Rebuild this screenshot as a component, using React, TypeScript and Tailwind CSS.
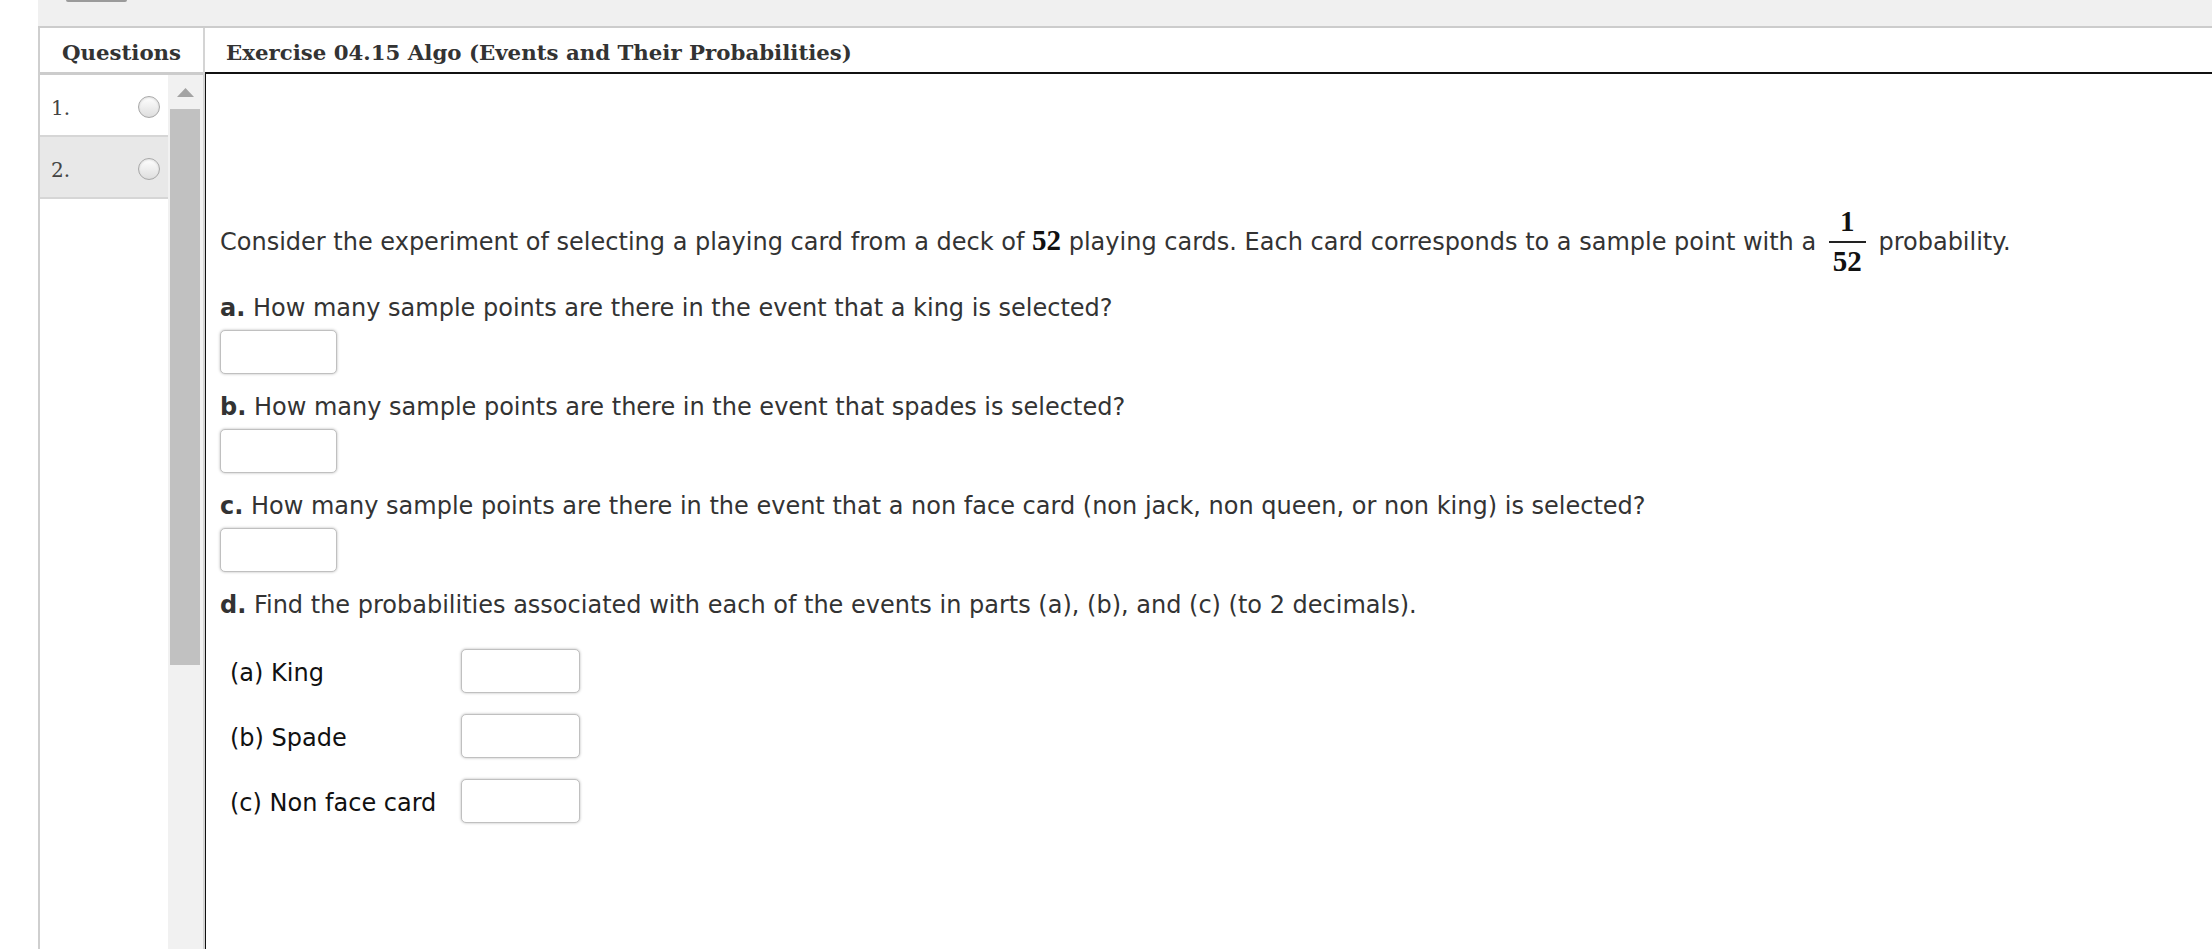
import React from 'react';

const sans = "font-['DejaVu_Sans',Verdana,sans-serif]";
const serif = "font-['DejaVu_Serif',serif]";

function AnswerBox({ className = '' }: { className?: string }) {
  return (
    <input
      type="text"
      aria-label="answer"
      className={`block h-[44px] rounded-[5px] border border-[#c0c0c0] bg-white shadow-[0_0_3px_rgba(0,0,0,0.28)] outline-none ${className}`}
    />
  );
}

function Radio() {
  return (
    <span className="mt-[4px] block h-[22px] w-[22px] rounded-full border border-[#a8a8a8] bg-linear-to-b from-white to-[#dedede] shadow-[inset_0_1px_2px_rgba(0,0,0,0.12)]" />
  );
}

function Fraction() {
  return (
    <span className="mx-[5px] inline-flex flex-col pb-[4px] align-middle font-['Liberation_Serif',serif] text-[29px] font-bold text-[#111]">
      <span className="block px-[4px] pb-[6px] text-center leading-[28px]">1</span>
      <span className="block h-[2px] bg-[#222]" />
      <span className="block px-[4px] pt-[4px] text-center leading-[28px]">52</span>
    </span>
  );
}

const questions = [
  { key: 'a.', text: 'How many sample points are there in the event that a king is selected?' },
  { key: 'b.', text: 'How many sample points are there in the event that spades is selected?' },
  {
    key: 'c.',
    text: 'How many sample points are there in the event that a non face card (non jack, non queen, or non king) is selected?',
  },
];

const probRows = ['(a) King', '(b) Spade', '(c) Non face card'];

export default function App() {
  return (
    <div className="flex h-[949px] w-full overflow-hidden bg-white">
      <div className="w-[38px] shrink-0" />
      <div className="flex min-w-0 flex-1 flex-col">
        {/* barra de cima */}
        <div className="h-[28px] shrink-0 border-b-2 border-[#cccccc] bg-[#f0f0f0]">
          <div className="ml-[28px] h-[2px] w-[61px] rounded-b-[3px] bg-[#9b9b9b]" />
        </div>

        <div className="flex min-h-0 flex-1 border-l-2 border-[#cfcfcf]">
          {/* lista de questões */}
          <div className="flex w-[165px] shrink-0 flex-col border-r-2 border-[#d4d4d4]">
            <div
              className={`flex h-[44px] shrink-0 items-center justify-center pt-[6px] text-[21.3px] font-bold text-[#333] ${serif}`}
            >
              Questions
            </div>
            <div className="flex min-h-0 flex-1 border-t-[3px] border-[#cccccc]">
              <div className="flex w-[128px] shrink-0 flex-col">
                {['1.', '2.'].map((n, i) => (
                  <div
                    key={n}
                    className={`flex h-[62px] items-center justify-between border-b-2 border-[#d6d6d6] pl-[11px] pr-[8px] ${
                      i === 1 ? 'bg-[#e8e8e8]' : 'bg-white'
                    }`}
                  >
                    <span className={`pt-[5px] text-[20px] text-[#444] ${serif}`}>{n}</span>
                    <Radio />
                  </div>
                ))}
              </div>
              <div className="flex flex-1 flex-col bg-[#f1f1f1]">
                <div className="flex h-[34px] items-center justify-center">
                  <svg width="17" height="9" viewBox="0 0 17 9">
                    <path d="M8.5 0 L17 9 L0 9 Z" fill="#a3a3a3" />
                  </svg>
                </div>
                <div className="ml-[2px] mr-[3px] h-[556px] bg-[#c1c1c1]" />
              </div>
            </div>
          </div>

          {/* exercício */}
          <div className="flex min-w-0 flex-1 flex-col">
            <div
              className={`flex h-[44px] shrink-0 items-center pl-[21px] pt-[6px] text-[21.3px] font-bold whitespace-nowrap text-[#333] ${serif}`}
            >
              Exercise 04.15 Algo (Events and Their Probabilities)
            </div>
            <div
              className={`flex-1 border-t-2 border-l border-[#111] pl-[14px] pt-[133px] text-[24px] whitespace-nowrap text-[#333] ${sans}`}
            >
              <p className="leading-[29px]">
                Consider the experiment of selecting a playing card from a deck of{' '}
                <span className="font-['Liberation_Serif',serif] text-[29px] font-bold text-[#111]">52</span>{' '}
                playing cards. Each card corresponds to a sample point with a <Fraction /> probability.
              </p>

              {questions.map((q, i) => (
                <div key={q.key} className={i === 0 ? 'mt-[15px]' : 'mt-[19px]'}>
                  <p className="leading-[29px]">
                    <b className="font-bold">{q.key}</b> {q.text}
                  </p>
                  <AnswerBox className="mt-[7px] w-[117px]" />
                </div>
              ))}

              <p className="mt-[19px] leading-[29px]">
                <b className="font-bold">d.</b> Find the probabilities associated with each of the events in parts
                (a), (b), and (c) (to 2 decimals).
              </p>

              <div className="mt-[29px] flex flex-col gap-[21px]">
                {probRows.map((label) => (
                  <div key={label} className="flex">
                    <div className="w-[241px] shrink-0 pl-[10px] pt-[10px] leading-[29px] text-[#111]">{label}</div>
                    <AnswerBox className="w-[119px]" />
                  </div>
                ))}
              </div>
            </div>
          </div>
        </div>
      </div>
    </div>
  );
}
